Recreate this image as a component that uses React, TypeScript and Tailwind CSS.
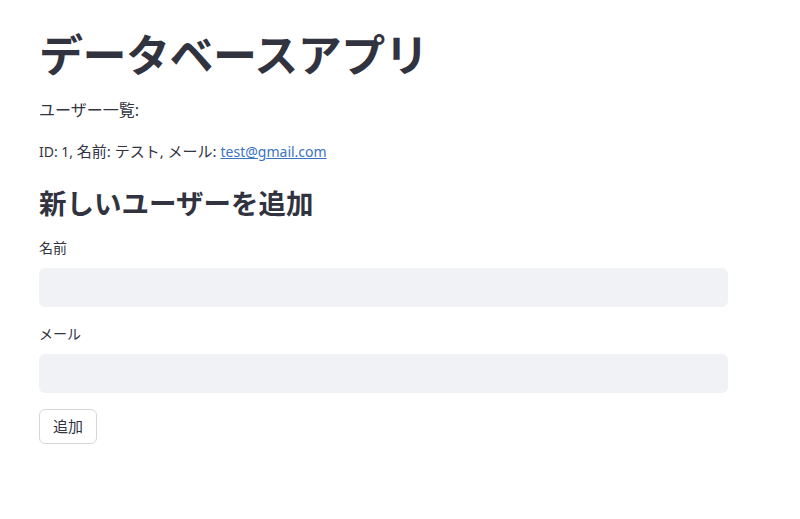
import React from 'react';

const font = { fontFamily: '"Noto Sans", "Noto Sans CJK JP", sans-serif' };

const App: React.FC = () => {
  return (
    <div className="min-h-screen bg-white text-[#31333F]" style={font}>
      <div className="w-[689px] ml-[39px] pt-[26px] flex flex-col">
        <h1 className="text-[44px] leading-[58px] font-bold tracking-[-0.5px]">データベースアプリ</h1>
        <p className="mt-[14px] text-[16px] leading-[24px]">ユーザー一覧:</p>
        <p className="mt-[17px] text-[14px] leading-[24px]">
          ID: 1, <span className="text-[15px]">名前: テスト, メール: </span>
          <a href="#" className="text-[#3b72c4] underline text-[14px]">test@gmail.com</a>
        </p>
        <h2 className="mt-[20px] text-[27.5px] leading-[40px] font-bold">新しいユーザーを追加</h2>
        <label className="mt-[14px] text-[14px] leading-[20px]">名前</label>
        <input className="mt-[10px] h-[39px] w-full rounded-md bg-[#F0F2F6] outline-none px-3" />
        <label className="mt-[17px] text-[14px] leading-[20px]">メール</label>
        <input className="mt-[10px] h-[39px] w-full rounded-md bg-[#F0F2F6] outline-none px-3" />
        <div className="mt-[16px]">
          <button className="h-[35px] px-[13px] rounded-md border border-[#d6d6d9] bg-white text-[15px]">追加</button>
        </div>
      </div>
    </div>
  );
};

export default App;
